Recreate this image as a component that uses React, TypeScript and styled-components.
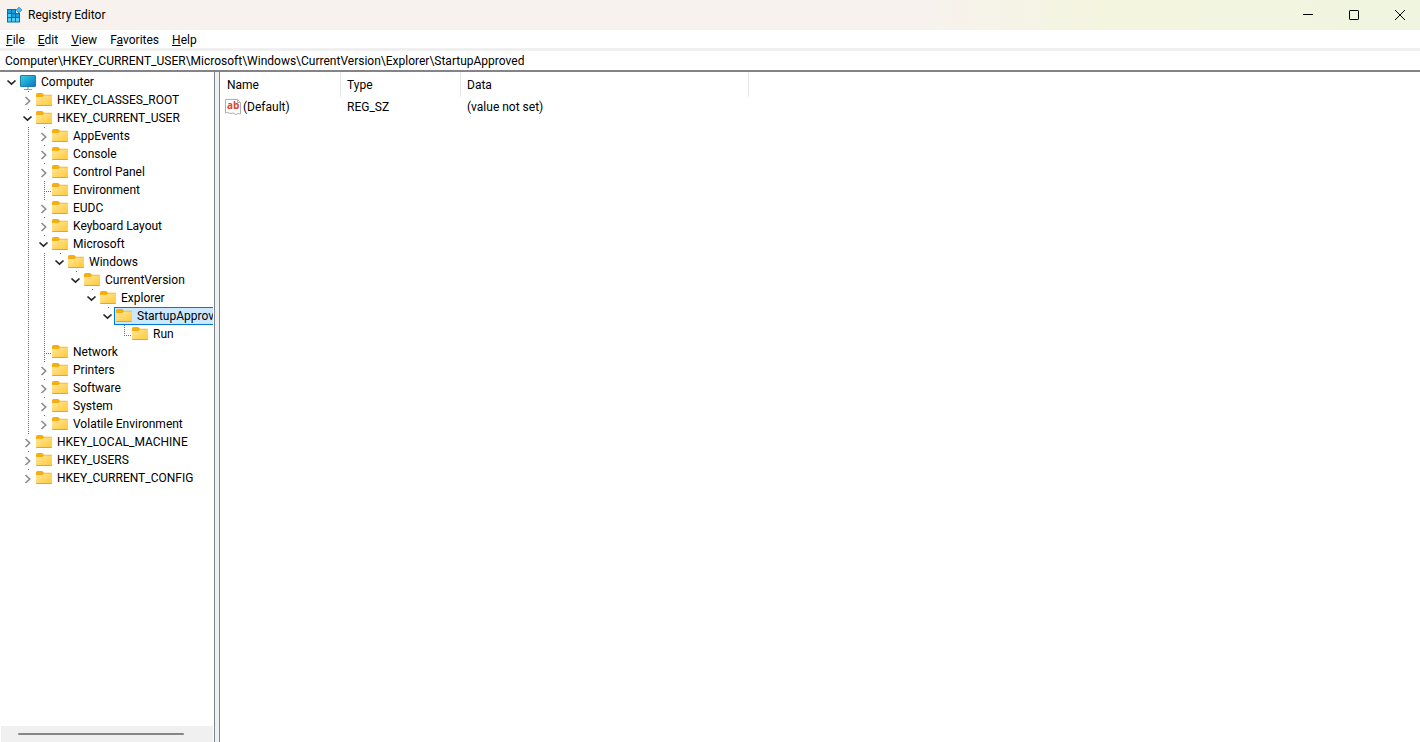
import React from "react";
import styled, { createGlobalStyle } from "styled-components";

const GlobalStyle = createGlobalStyle`
  * { box-sizing: border-box; }
  html, body { margin: 0; height: 100%; }
  #root { height: 100%; }
  body, button, input { font-family: Roboto, "Segoe UI", sans-serif; font-size: 12px; color: #000; }
  button { border: 0; padding: 0; background: none; }
`;

const Window = styled.div`
  display: flex;
  flex-direction: column;
  height: 100vh;
  background: #fff;
  overflow: hidden;
`;

const TitleBar = styled.header`
  flex: none;
  display: flex;
  align-items: center;
  height: 30px;
  padding-left: 6px;
  background: linear-gradient(90deg, #f7f2ee 0%, #f7f2ee 65%, #f4f5df 78%, #f0f5e0 100%);
`;

const Title = styled.h1`
  flex: 1;
  margin: 0;
  padding-left: 6px;
  font-size: 12px;
  line-height: 16px;
  font-weight: 400;
`;

const WindowControls = styled.div`
  display: flex;
  gap: 6px;
`;

const WindowButton = styled.button`
  width: 40px;
  height: 28px;
  display: flex;
  align-items: center;
  justify-content: center;
`;

const MenuBar = styled.nav`
  flex: none;
  display: flex;
  gap: 13px;
  height: 21px;
  padding: 2px 0 0 6px;
  border-bottom: 3px solid #f0f0f0;
`;

const MenuItem = styled.button`
  line-height: 16px;
`;

const Address = styled.input`
  flex: none;
  width: 100%;
  height: 21px;
  padding: 0 5px;
  border: 0;
  border-bottom: 2px solid #848388;
  outline: 0;
`;

const Panes = styled.main`
  flex: 1;
  min-height: 0;
  display: flex;
`;

const TreePane = styled.section`
  flex: none;
  display: flex;
  flex-direction: column;
  width: 215px;
  padding-right: 1px;
  border-right: 1px solid #7f858c;
`;

const Tree = styled.ul`
  flex: 1;
  min-height: 0;
  margin: 0;
  padding: 1px 0 0 4px;
  list-style: none;
  overflow: hidden;
`;

const Row = styled.li`
  display: flex;
  height: 18px;
`;

const Cell = styled.span`
  flex: none;
  position: relative;
  width: 16px;
  height: 18px;
`;

const dots = (angle: string) =>
  `repeating-linear-gradient(${angle}, #707070 0, #707070 1px, transparent 1px, transparent 2px)`;

const VerticalDots = styled.i<{ $length: number }>`
  position: absolute;
  left: 8px;
  top: 0;
  width: 1px;
  height: ${(p) => p.$length}px;
  background: ${dots("180deg")};
`;

const HorizontalDots = styled.i`
  position: absolute;
  left: 10px;
  top: 10px;
  width: 6px;
  height: 1px;
  background: ${dots("90deg")};
`;

const Expander = styled.button`
  position: absolute;
  inset: 0;
  display: flex;
`;

const Label = styled.span<{ $selected?: boolean }>`
  flex: none;
  display: flex;
  align-items: center;
  gap: 5px;
  height: 18px;
  margin-left: -2px;
  padding: 0 3px 0 1px;
  line-height: 16px;
  white-space: nowrap;
  border: 1px solid ${(p) => (p.$selected ? "#0078d7" : "transparent")};
  background: ${(p) => (p.$selected ? "#cce8ff" : "transparent")};
`;

const ScrollTrack = styled.div`
  flex: none;
  height: 16px;
  margin-left: 1px;
  padding: 7px 29px 7px 17px;
  background: #f0f0f0;
`;

const ScrollThumb = styled.div`
  height: 2px;
  border-radius: 1px;
  background: #868686;
`;

const Splitter = styled.div`
  flex: none;
  width: 5px;
  background: #f0f0f0;
  border-right: 1px solid #7f858c;
`;

const ListPane = styled.section`
  flex: 1;
  min-width: 0;
`;

const ValueTable = styled.table`
  table-layout: fixed;
  width: 529px;
  border-collapse: separate;
  border-spacing: 0;
`;

const HeadCell = styled.th<{ $width: number }>`
  width: ${(p) => p.$width}px;
  height: 25px;
  padding: 0 0 0 6px;
  text-align: left;
  font-weight: 400;
  border-right: 1px solid #e5e5e5;

  &:first-child { padding-left: 7px; }
`;

const DataCell = styled.td`
  height: 20px;
  padding: 0 0 0 6px;
`;

const NameCell = styled(DataCell)`
  padding-left: 5px;
`;

const NameContent = styled.span`
  display: flex;
  align-items: center;
  gap: 2px;
`;

const Folder = () => (
  <svg width="16" height="16" viewBox="0 0 16 16" aria-hidden="true">
    <defs>
      <linearGradient id="folder" x1="0" y1="0" x2="1" y2="1">
        <stop offset="0" stopColor="#ffe69a" />
        <stop offset="1" stopColor="#ffc937" />
      </linearGradient>
    </defs>
    <path d="M0 2.5Q0 1 1.5 1H6.2L8 2.7H15Q16 2.7 16 3.7V6H0Z" fill="#f4b010" />
    <path d="M0 5H6.5L8 3.6H15.2Q16 3.6 16 4.4V13Q16 14 15 14H1Q0 14 0 13Z" fill="url(#folder)" />
    <path d="M0.3 13.5H15.7" stroke="#e5a623" />
  </svg>
);

const Monitor = () => (
  <svg width="16" height="16" viewBox="0 0 16 16" aria-hidden="true">
    <defs>
      <linearGradient id="screen" x1="0" y1="0" x2="1" y2="1">
        <stop offset="0" stopColor="#36d2dc" />
        <stop offset="1" stopColor="#0875c5" />
      </linearGradient>
    </defs>
    <path d="M7 13H9V15H7Z" fill="#b9c3cc" />
    <path d="M4 15.5H12" stroke="#8d9aa5" />
    <rect x="0.5" y="1.5" width="15" height="11" rx="0.5" fill="url(#screen)" stroke="#1a7fb0" />
  </svg>
);

const PageLetters = styled.text`
  font-family: "Open Sans", sans-serif;
  font-size: 10px;
  font-weight: 700;
  fill: #d9472b;
`;

const StringValue = () => (
  <svg width="16" height="16" viewBox="0 0 16 16" aria-hidden="true">
    <path d="M0.5 0.5H12.5L15.5 3.5V15L13 14.5L11 15.5L8 14L5 14.5L3 13.5L0.5 14Z" fill="#fff" stroke="#b0b0b0" />
    <path d="M12.5 0.5V3.5H15.5" fill="none" stroke="#b0b0b0" />
    <PageLetters x="2" y="10">ab</PageLetters>
  </svg>
);

const AppIcon = () => (
  <svg width="16" height="16" viewBox="0 0 16 16" aria-hidden="true">
    <path d="M1 2H10V6H14V15.5H1Z" fill="#0b6ba8" />
    <path d="M2 3H5V6H2ZM6 3H9V6H6ZM6 7H9V10H6ZM10 7H13V10H10Z" fill="#159fe0" />
    <path d="M2 7H5V10H2ZM2 11H5V14.5H2ZM6 11H9V14.5H6ZM10 11H13V14.5H10Z" fill="#50cdf8" />
    <path d="M13 0.2L15.8 3L13 5.8L10.2 3Z" fill="#4cc3f0" stroke="#1578b4" strokeWidth="0.8" />
  </svg>
);

const Chevron = ({ open }: { open: boolean }) => (
  <svg width="16" height="18" viewBox="0 0 16 18" fill="none" aria-hidden="true">
    {open ? (
      <path d="M3.5 7.5L7.5 11.2L11.5 7.5" stroke="#262626" strokeWidth="1.7" />
    ) : (
      <path d="M5.5 6L9.7 10L5.5 14" stroke="#8c8c8c" strokeWidth="1.6" />
    )}
  </svg>
);

type RegistryKey = { name: string; closed?: boolean; selected?: boolean; children?: RegistryKey[] };

const closed = (name: string): RegistryKey => ({ name, closed: true });

const registry: RegistryKey = {
  name: "Computer",
  children: [
    closed("HKEY_CLASSES_ROOT"),
    {
      name: "HKEY_CURRENT_USER",
      children: [
        closed("AppEvents"),
        closed("Console"),
        closed("Control Panel"),
        { name: "Environment" },
        closed("EUDC"),
        closed("Keyboard Layout"),
        {
          name: "Microsoft",
          children: [
            {
              name: "Windows",
              children: [
                {
                  name: "CurrentVersion",
                  children: [
                    {
                      name: "Explorer",
                      children: [{ name: "StartupApproved", selected: true, children: [{ name: "Run" }] }],
                    },
                  ],
                },
              ],
            },
          ],
        },
        { name: "Network" },
        closed("Printers"),
        closed("Software"),
        closed("System"),
        closed("Volatile Environment"),
      ],
    },
    closed("HKEY_LOCAL_MACHINE"),
    closed("HKEY_USERS"),
    closed("HKEY_CURRENT_CONFIG"),
  ],
};

type BranchProps = { item: RegistryKey; guides?: boolean[]; last?: boolean };

const Branch = ({ item, guides = [], last = true }: BranchProps) => {
  const root = item === registry;
  const expandable = Boolean(item.closed || item.children);
  const children = item.children ?? [];
  return (
    <>
      <Row role="treeitem" aria-level={guides.length + 1} aria-selected={Boolean(item.selected)}>
        {guides.map((line, i) => (
          <Cell key={i}>{line && <VerticalDots $length={18} />}</Cell>
        ))}
        <Cell>
          {!root && <VerticalDots $length={expandable ? 1 : last ? 11 : 18} />}
          {!expandable && <HorizontalDots />}
          {expandable && (
            <Expander aria-label={`${item.closed ? "Expand" : "Collapse"} ${item.name}`}>
              <Chevron open={!item.closed} />
            </Expander>
          )}
        </Cell>
        <Label $selected={item.selected}>
          {root ? <Monitor /> : <Folder />}
          {item.name}
        </Label>
      </Row>
      {children.map((child, i) => (
        <Branch key={child.name} item={child} guides={[...guides, !last]} last={i === children.length - 1} />
      ))}
    </>
  );
};

const menus = ["File", "Edit", "View", "Favorites", "Help"];
const accessKeys: Record<string, number> = { Favorites: 1 };

const MenuLabel = ({ text }: { text: string }) => {
  const at = accessKeys[text] ?? 0;
  return (
    <>
      {text.slice(0, at)}
      <u>{text[at]}</u>
      {text.slice(at + 1)}
    </>
  );
};

export default function App() {
  return (
    <Window>
      <GlobalStyle />
      <TitleBar>
        <AppIcon />
        <Title>Registry Editor</Title>
        <WindowControls>
          <WindowButton aria-label="Minimize">
            <svg width="10" height="10" viewBox="0 0 10 10"><path d="M0 4.5H10" stroke="#000" /></svg>
          </WindowButton>
          <WindowButton aria-label="Maximize">
            <svg width="10" height="10" viewBox="0 0 10 10"><rect x="0.5" y="0.5" width="9" height="9" rx="0.6" fill="none" stroke="#000" /></svg>
          </WindowButton>
          <WindowButton aria-label="Close">
            <svg width="10" height="10" viewBox="0 0 10 10"><path d="M0 0L10 10M10 0L0 10" stroke="#000" /></svg>
          </WindowButton>
        </WindowControls>
      </TitleBar>
      <MenuBar>
        {menus.map((m) => (
          <MenuItem key={m}><MenuLabel text={m} /></MenuItem>
        ))}
      </MenuBar>
      <Address
        aria-label="Address"
        defaultValue={"Computer\\HKEY_CURRENT_USER\\Microsoft\\Windows\\CurrentVersion\\Explorer\\StartupApproved"}
      />
      <Panes>
        <TreePane>
          <Tree role="tree" aria-label="Registry keys">
            <Branch item={registry} />
          </Tree>
          <ScrollTrack><ScrollThumb /></ScrollTrack>
        </TreePane>
        <Splitter />
        <ListPane>
          <ValueTable>
            <thead>
              <tr>
                <HeadCell $width={121}>Name</HeadCell>
                <HeadCell $width={120}>Type</HeadCell>
                <HeadCell $width={288}>Data</HeadCell>
              </tr>
            </thead>
            <tbody>
              <tr>
                <NameCell><NameContent><StringValue />(Default)</NameContent></NameCell>
                <DataCell>REG_SZ</DataCell>
                <DataCell>(value not set)</DataCell>
              </tr>
            </tbody>
          </ValueTable>
        </ListPane>
      </Panes>
    </Window>
  );
}
